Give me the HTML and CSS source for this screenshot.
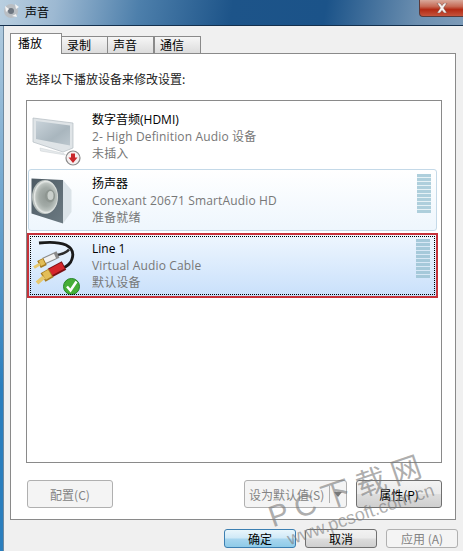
FILE: index.html
```html
<!DOCTYPE html>
<html lang="zh-CN">
<head>
  <meta charset="UTF-8">
  <title>声音</title>
  <link rel="stylesheet" href="styles.css">
</head>
<body>
  <div class="window">
    <div class="titlebar">
      <svg class="app-icon" width="20" height="20" viewBox="0 0 20 20">
        <circle cx="10" cy="10" r="7" fill="#b9bec3"/>
        <circle cx="10" cy="10" r="3" fill="#6d7680"/>
        <path d="M4 5l4 3-3 3zM14 3l1 5 3-2zM11 15l4-2 1 3z" fill="#f4f4f4"/>
      </svg>
      <span class="title">声音</span>
      <div class="close">
        <svg width="12" height="10" viewBox="0 0 12 10"><path d="M1 0h3l2 2.600L8 0h3L7.600 5 11 10H8L6 7.400 4 10H1l3.400-5z" fill="#f5f0ee" stroke="#6d3a30" stroke-width=".5"/></svg>
      </div>
    </div>

    <div class="client">
      <div class="tabs">
        <div class="tab active">播放</div>
        <div class="tab">录制</div>
        <div class="tab">声音</div>
        <div class="tab">通信</div>
      </div>

      <div class="panel">
        <p class="hint">选择以下播放设备来修改设置:</p>

        <div class="list">
          <div class="device">
            <svg class="device-icon" width="56" height="56" viewBox="0 0 56 56">
              <defs>
                <linearGradient id="screen" x1="0" y1="0" x2="1" y2="1">
                  <stop offset="0" stop-color="#c9d3da"/>
                  <stop offset=".6" stop-color="#a9b6be"/>
                  <stop offset="1" stop-color="#bcc7ce"/>
                </linearGradient>
              </defs>
              <path d="M3 10l40 5v25L33 44 3 34z" fill="#dfe4e7" stroke="#b3bcc2" stroke-width=".7"/>
              <path d="M6 13l34 4.500v20L6 31z" fill="url(#screen)"/>
              <path d="M10 40l24 5.500 1.500 1.500-25-4z" fill="#e6eaec" stroke="#c8cfd3" stroke-width=".5"/>
              <circle cx="43" cy="50" r="7" fill="#f6f0f0" stroke="#8b8b8b" stroke-width="1.200"/>
              <path d="M41 45.500h4v4h2.500L43 55 38.500 49.500h2.500z" fill="#c9272b"/>
            </svg>
            <div class="device-text">
              <div class="device-name">数字音频(HDMI)</div>
              <div class="device-line">2- High Definition Audio 设备</div>
              <div class="device-line">未插入</div>
            </div>
          </div>

          <div class="device ready">
            <svg class="device-icon" width="56" height="56" viewBox="0 0 56 56">
              <defs>
                <linearGradient id="box" x1="0" y1="0" x2="1" y2="1">
                  <stop offset="0" stop-color="#4d5a63"/>
                  <stop offset="1" stop-color="#6c7a82"/>
                </linearGradient>
                <radialGradient id="cone" cx=".55" cy=".5">
                  <stop offset="0" stop-color="#8f9793"/>
                  <stop offset=".55" stop-color="#a3aba7"/>
                  <stop offset=".8" stop-color="#bcc3bf"/>
                  <stop offset=".92" stop-color="#e6e9e7"/>
                  <stop offset="1" stop-color="#b9c0bd"/>
                </radialGradient>
              </defs>
              <path d="M1.500 6.500L33 8v43.500l-31.500-10z" fill="url(#box)"/>
              <path d="M33 8l8.500 10v22L33 51.500z" fill="#dbe3e8"/>
              <ellipse cx="15" cy="25" rx="13" ry="17" fill="url(#cone)"/>
              <ellipse cx="20" cy="24" rx="5" ry="6.500" fill="#8e9691"/>
              <ellipse cx="20.500" cy="23.500" rx="3" ry="4.500" fill="#c9cfcb"/>
            </svg>
            <div class="device-text">
              <div class="device-name">扬声器</div>
              <div class="device-line">Conexant 20671 SmartAudio HD</div>
              <div class="device-line">准备就绪</div>
            </div>
            <div class="meter"></div>
          </div>

          <div class="device selected">
            <svg class="device-icon" width="56" height="56" viewBox="0 0 56 56">
              <path d="M9 5c9-1 20-1 27 2 6 3 8 8 6 14-1 4-5 8-10 9" fill="none" stroke="#1a1a1a" stroke-width="2.800"/>
              <path d="M25 17.500c6-1 11-2 14-6" fill="none" stroke="#2c2c2c" stroke-width="2.500"/>
              <path d="M28 16.500L14 23" stroke="#8a8a8a" stroke-width="7"/>
              <path d="M25 18L14 23" stroke="#f2f2f2" stroke-width="5"/>
              <path d="M34 27.500L20 35" stroke="#7c1014" stroke-width="9.500"/>
              <path d="M33 27.500L20 34.500" stroke="#d5262c" stroke-width="7"/>
              <path d="M15 23.500l-6 3" stroke="#a67c20" stroke-width="8"/>
              <path d="M14 23.500l-4 2" stroke="#e3be58" stroke-width="5.500"/>
              <path d="M10 26l-6 3.500" stroke="#e6c86e" stroke-width="3"/>
              <path d="M21 35l-8 4.500" stroke="#a67c20" stroke-width="10"/>
              <path d="M20 35l-6 3.500" stroke="#e3be58" stroke-width="7.500"/>
              <path d="M14 39l-7 6" stroke="#e6c86e" stroke-width="4"/>
              <circle cx="41.500" cy="48.500" r="8" fill="#46ae36" stroke="#26852a" stroke-width="1"/>
              <path d="M37 48.500l3.500 4 6-9" fill="none" stroke="#fff" stroke-width="2.500"/>
            </svg>
            <div class="device-text">
              <div class="device-name">Line 1</div>
              <div class="device-line">Virtual Audio Cable</div>
              <div class="device-line">默认设备</div>
            </div>
            <div class="meter"></div>
          </div>
        </div>

        <div class="actions">
          <button class="btn btn-config" disabled>配置(C)</button>
          <div class="actions-right">
            <div class="btn split" aria-disabled="true">
              <span class="split-label">设为默认值(S)</span>
              <span class="split-arrow"></span>
            </div>
            <button class="btn btn-props">属性(P)</button>
          </div>
        </div>
      </div>

      <div class="footer">
        <button class="btn dlg default">确定</button>
        <button class="btn dlg normal">取消</button>
        <button class="btn dlg" disabled>应用 (A)</button>
      </div>
    </div>
  </div>

  <div class="watermark big">PC下载网</div>
  <div class="watermark small">www.pcsoft.com.cn</div>
</body>
</html>
```

FILE: styles.css
```css
* {
  margin: 0;
  padding: 0;
  box-sizing: border-box;
}

html, body {
  width: 463px;
  height: 551px;
  overflow: hidden;
}

body {
  font-family: "Open Sans", "Noto Sans CJK SC", sans-serif;
  font-size: 12px;
  color: #000;
  position: relative;
}

.window {
  height: 551px;
  display: flex;
  flex-direction: column;
  background: linear-gradient(#b9cfe0, #2b7fbe 70%);
}

.titlebar {
  height: 26px;
  flex: none;
  display: flex;
  align-items: center;
  padding-left: 1px;
  background: linear-gradient(100deg, #b9cfe0 0, #9db9d2 12%, #4d7fab 30%, #1d5489 50%, #1b5389 70%, #6c8fb0 90%, #7d9bb8 100%);
  border-bottom: 1px solid #14304d;
}

.app-icon {
  margin-top: -3px;
}

.title {
  margin: -3px 0 0 4px;
  font-size: 12px;
  font-family: "Noto Sans CJK SC", sans-serif;
}

.close {
  margin-left: auto;
  align-self: flex-start;
  width: 44px;
  height: 17px;
  display: flex;
  align-items: center;
  justify-content: center;
  background: linear-gradient(#d9a99b 0, #c66a55 40%, #b32a14 60%, #c5533c 100%);
  border: 1px solid #5a3a3a;
  border-top: none;
  border-right: none;
  border-radius: 0 0 0 4px;
}

.client {
  flex: 1;
  margin-left: 3px;
  border-left: 1px solid #6f8aa0;
  background: #f0f0f0;
  padding: 7px 7px 0 6px;
}

.tabs {
  height: 20px;
  display: flex;
  align-items: flex-end;
  position: relative;
  z-index: 1;
}

.tab {
  height: 17px;
  width: 47px;
  padding-left: 5px;
  line-height: 15px;
  font-size: 12px;
  font-family: "Noto Sans CJK SC", sans-serif;
  background: linear-gradient(#f6f6f6, #dcdcdc);
  border: 1px solid #8a8a8a;
  border-bottom: none;
  margin-left: -1px;
}

.tab:last-child {
  margin-left: 0;
}

.tab.active {
  height: 21px;
  width: 52px;
  margin: 0 0 -1px 0;
  background: #fff;
  line-height: 18px;
  padding-left: 7px;
}

.panel {
  height: 467px;
  background: #fff;
  border: 1px solid #8a8a8a;
  padding: 0 13px 0 15px;
}

.hint {
  margin-top: 16px;
  line-height: 18px;
  height: 18px;
  color: #222;
  font-family: "Noto Sans CJK SC", sans-serif;
}

.list {
  margin-top: 12px;
  height: 363px;
  border: 1px solid #8a8a8a;
  padding: 4px 4px 0 1px;
  display: flex;
  flex-direction: column;
  gap: 2px;
}

.device {
  height: 62px;
  flex: none;
  display: flex;
  align-items: center;
  padding-left: 1px;
  position: relative;
  border: 1px solid transparent;
}

.device-icon {
  flex: none;
  margin-right: 6px;
  overflow: visible;
}

.device-text {
  line-height: 17px;
}

.device-name {
  color: #000;
}

.device-line {
  color: #777;
  letter-spacing: .15px;
}

.ready {
  border-color: #c4d9e8;
  border-radius: 3px;
  background: linear-gradient(#fff, #eef6fd);
}

.selected {
  height: 65px;
  margin: 0 -1px;
  padding-left: 1px;
  background: linear-gradient(#eef6fe, #c9e0fb);
  outline: 1px dotted #000;
  outline-offset: -4px;
  border: 2px solid #c5323a;
}

.meter {
  position: absolute;
  right: 5px;
  top: 4px;
  width: 14px;
  height: 39px;
  background: repeating-linear-gradient(#aecfdc 0, #aecfdc 3px, #e6f2f6 3px, #e6f2f6 4px);
}

.selected .meter {
  right: 6px;
  background: repeating-linear-gradient(#a5c9da 0, #a5c9da 3px, #d8e8f6 3px, #d8e8f6 4px);
}

.actions {
  margin-top: 17px;
  display: flex;
  justify-content: space-between;
  padding: 0 0 0 1px;
}

.actions-right {
  display: flex;
  gap: 9px;
}

.btn {
  height: 28px;
  font-family: "Noto Sans CJK SC", sans-serif;
  font-size: 12px;
  border: 1px solid #b0b0b0;
  border-radius: 3px;
  background: #f4f4f4;
  color: #838383;
}

.btn-config {
  width: 86px;
}

.split {
  width: 103px;
  display: flex;
  align-items: center;
}

.split-label {
  flex: 1;
  padding-left: 4px;
  white-space: nowrap;
  border-right: 1px solid #b0b0b0;
  line-height: 17px;
}

.split-arrow {
  width: 16px;
  height: 0;
  position: relative;
}

.split-arrow::after {
  content: "";
  position: absolute;
  left: 4px;
  top: -2px;
  border: 4px solid transparent;
  border-top: 5px solid #777;
  border-bottom: none;
}

.btn-props {
  width: 86px;
  color: #000;
  border-color: #707070;
  background: linear-gradient(#f2f2f2 0, #ebebeb 48%, #dddddd 52%, #cfcfcf 100%);
}

.footer {
  display: flex;
  justify-content: flex-end;
  gap: 9px;
  margin-top: 9px;
  margin-right: -2px;
}

.dlg {
  width: 72px;
  height: 19px;
  line-height: 16px;
}

.default {
  color: #000;
  border: 1px solid #3c7fb1;
  background: linear-gradient(#e9f6fc 0, #cfe9f7 48%, #a8d6ef 52%, #8fcbe8 100%);
}

.normal {
  color: #000;
  border-color: #707070;
  background: linear-gradient(#f2f2f2 0, #ebebeb 48%, #dddddd 52%, #cfcfcf 100%);
}

.watermark {
  position: absolute;
  color: rgba(120, 120, 120, .6);
  font-family: "Liberation Sans", "Noto Sans CJK SC", sans-serif;
  white-space: nowrap;
  transform-origin: left bottom;
  pointer-events: none;
}

.big {
  left: 275px;
  top: 500px;
  line-height: 34px;
  font-size: 30px;
  letter-spacing: 7px;
  transform: rotate(-19deg);
}

.small {
  left: 291px;
  top: 529px;
  line-height: 20px;
  font-size: 18px;
  transform: rotate(-19deg);
}
```
